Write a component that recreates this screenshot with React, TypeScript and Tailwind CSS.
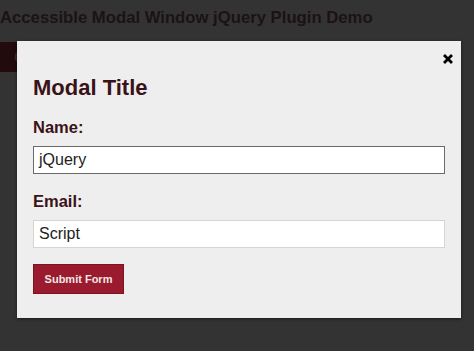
export default function App() {
  return (
    <div
      className="relative w-[474px] h-[351px] overflow-hidden bg-[#333333]"
      style={{ fontFamily: '"Liberation Sans", Arial, sans-serif' }}
    >
      <h1 className="pt-[8px] pl-0 text-[16.7px] leading-[19px] font-bold text-[#1c1214]">
        Accessible Modal Window jQuery Plugin Demo
      </h1>
      <div className="mt-[15px] w-[60px] h-[30px] bg-[#220a0d] text-[#3a2a2c] text-[14px] font-bold leading-[30px] pl-[14px]">
        Open
      </div>

      <div className="absolute left-[17px] top-[41px] w-[444px] h-[277px] bg-[#eeeeee] shadow-[0_1px_3px_rgba(0,0,0,0.5)] pl-[16px] pr-[16px]">
        <button className="absolute right-[7px] top-[12px] w-[12px] h-[12px] flex items-center justify-center">
          <svg width="12" height="12" viewBox="0 0 12 12">
            <path d="M2 2 L10 10 M10 2 L2 10" stroke="#000" strokeWidth="2.8" strokeLinecap="butt" />
          </svg>
        </button>
        <h2 className="mt-[34px] text-[22px] leading-[26px] font-bold text-[#3a1218]">Modal Title</h2>
        <label className="block mt-[17px] text-[16.5px] leading-[18px] font-bold text-[#3a1218]">Name:</label>
        <div className="mt-[10px] w-[412px] h-[28px] bg-white border border-[#6a6a6a] pl-[5px] text-[16px] leading-[26px] text-[#222]">
          jQuery
        </div>
        <label className="block mt-[18px] text-[16.5px] leading-[18px] font-bold text-[#3a1218]">Email:</label>
        <div className="mt-[10px] w-[412px] h-[28px] bg-white border border-[#d9d4d4] pl-[5px] text-[16px] leading-[26px] text-[#222]">
          Script
        </div>
        <button className="mt-[16px] block w-[91px] h-[30px] bg-[#9a1b2d] border border-[#7a1423] text-[11px] font-bold text-[#f3e6e8] leading-[28px] text-center">
          Submit Form
        </button>
      </div>
    </div>
  );
}
